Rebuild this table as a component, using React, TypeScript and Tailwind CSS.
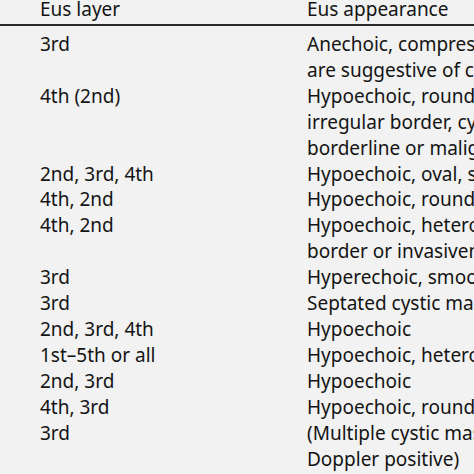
const rows: { layer: string; lines: string[] }[] = [
  { layer: "3rd", lines: ["Anechoic, compressible, round or oval lesions", "are suggestive of cysts"] },
  { layer: "4th (2nd)", lines: ["Hypoechoic, round or oval, smooth or", "irregular border, cystic spaces suggest", "borderline or malignant"] },
  { layer: "2nd, 3rd, 4th", lines: ["Hypoechoic, oval, smooth border"] },
  { layer: "4th, 2nd", lines: ["Hypoechoic, round, smooth border"] },
  { layer: "4th, 2nd", lines: ["Hypoechoic, heterogeneous, irregular", "border or invasiveness"] },
  { layer: "3rd", lines: ["Hyperechoic, smooth border"] },
  { layer: "3rd", lines: ["Septated cystic mass"] },
  { layer: "2nd, 3rd, 4th", lines: ["Hypoechoic"] },
  { layer: "1st\u20135th or all", lines: ["Hypoechoic, heterogeneous"] },
  { layer: "2nd, 3rd", lines: ["Hypoechoic"] },
  { layer: "4th, 3rd", lines: ["Hypoechoic, round, smooth border"] },
  { layer: "3rd", lines: ["(Multiple cystic masses, color", "Doppler positive)"] },
];

export default function App() {
  return (
    <div
      className="w-[474px] h-[474px] overflow-hidden bg-[#f1f2f1] text-[#141414] text-[19px]"
      style={{ fontFamily: '"Noto Sans", "Open Sans", sans-serif' }}
    >
      {/* header */}
      <div className="grid grid-cols-[267px_1fr] pl-[40px] leading-[18px] pb-[6px] border-b-2 border-[#2a2a2a] whitespace-nowrap">
        <div>Eus layer</div>
        <div>Eus appearance</div>
      </div>

      {/* body */}
      <div className="pt-[6px] leading-[25.9px]">
        {rows.map((r, i) => (
          <div key={i} className="grid grid-cols-[267px_1fr] pl-[40px] whitespace-nowrap">
            <div>{r.layer}</div>
            <div className="overflow-hidden">
              {r.lines.map((l, j) => (
                <div key={j}>{l}</div>
              ))}
            </div>
          </div>
        ))}
      </div>
    </div>
  );
}
